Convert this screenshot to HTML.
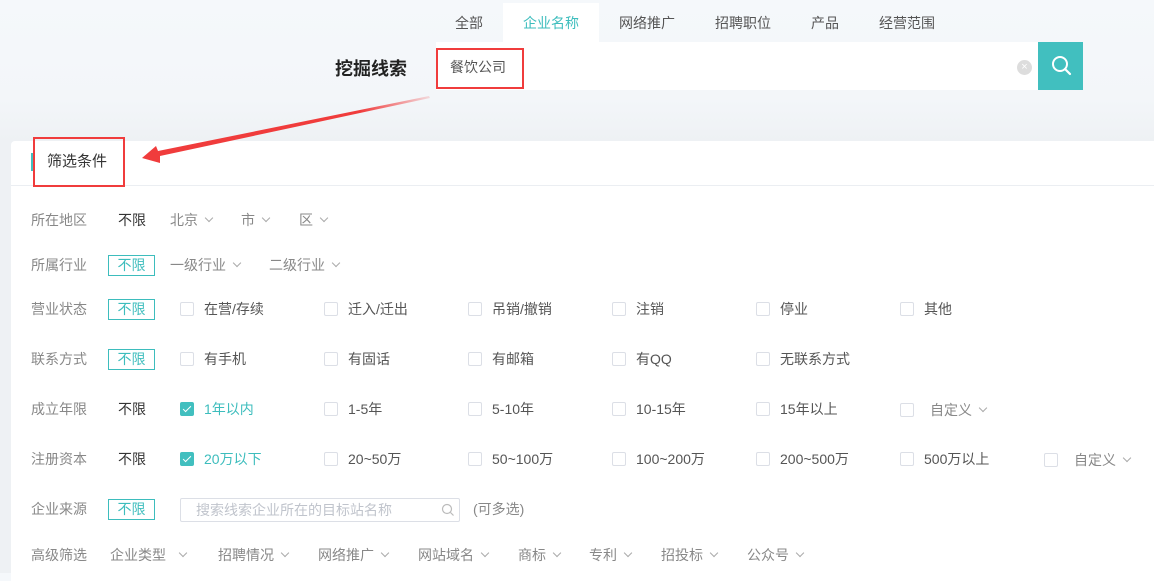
<!DOCTYPE html>
<html><head><meta charset="utf-8"><style>
*{margin:0;padding:0;box-sizing:border-box}
body{width:1154px;height:573px;overflow:hidden;position:relative;font-family:"Liberation Sans","Noto Sans CJK SC",sans-serif;font-size:14px;color:#555;background:linear-gradient(#f5f8fb 0,#f3f6f9 100px,#eef1f4 141px)}
.a{position:absolute;white-space:nowrap;line-height:20px}
.tab{top:12px;height:30px;line-height:22px;color:#555}
.lbl{color:#888;left:31px}
.nb{color:#333}
.box{border:1px solid #3dbdbd;color:#3dbdbd;width:47px;height:21px;line-height:19px;text-align:center;left:108px}
.cb{width:14px;height:14px;border:1px solid #dcdfe6;border-radius:2px;background:#fff}
.ck{background:#41bfbf;border-color:#41bfbf}
.ck:after{content:"";position:absolute;left:4px;top:1px;width:3px;height:7px;border:solid #fff;border-width:0 1.5px 1.5px 0;transform:rotate(45deg)}
.dd{color:#888}
.dd i{display:inline-block;width:6px;height:6px;border-right:1px solid #aaa;border-bottom:1px solid #aaa;transform:rotate(45deg);margin-left:8px;position:relative;top:-4px}
.t{color:#3dbdbd}
</style></head><body>
<div class="a" style="left:503px;top:3px;width:96px;height:39px;background:#fff"></div>
<div class="a tab" style="left:455px">全部</div>
<div class="a tab" style="left:523px;color:#3dbdbd">企业名称</div>
<div class="a tab" style="left:619px">网络推广</div>
<div class="a tab" style="left:715px">招聘职位</div>
<div class="a tab" style="left:811px">产品</div>
<div class="a tab" style="left:879px">经营范围</div>
<div class="a" style="left:335px;top:57px;font-size:18px;font-weight:bold;color:#222;line-height:24px">挖掘线索</div>
<div class="a" style="left:436px;top:42px;width:602px;height:48px;background:#fff"></div>
<div class="a" style="left:450px;top:57px;color:#555">餐饮公司</div>
<div class="a" style="left:1017px;top:60px;width:15px;height:15px;border-radius:50%;background:#ddd;color:#fff;font-size:11px;line-height:15px;text-align:center">×</div>
<div class="a" style="left:1038px;top:42px;width:45px;height:48px;background:#41bfbf">
<svg width="45" height="48" viewBox="0 0 45 48"><circle cx="22" cy="22" r="7" fill="none" stroke="#fff" stroke-width="2"/><path d="M27 27l5 5" stroke="#fff" stroke-width="2.2" stroke-linecap="round"/></svg></div>
<div class="a" style="left:436px;top:48px;width:88px;height:41px;border:2px solid #f03c3c"></div>

<div class="a" style="left:11px;top:141px;width:1150px;height:440px;background:#fff;border-radius:4px 0 0 0"></div>
<div class="a" style="left:11px;top:185px;width:1143px;height:1px;background:#ebeef2"></div>
<div class="a" style="left:31px;top:153px;width:2px;height:18px;background:#41bfbf"></div>
<div class="a" style="left:47px;top:152px;color:#333;font-size:15px">筛选条件</div>
<div class="a" style="left:33px;top:137px;width:92px;height:50px;border:2px solid #f03c3c"></div>

<svg class="a" style="left:0;top:0" width="1154" height="573"><defs><linearGradient id="g" x1="430" y1="96" x2="150" y2="156" gradientUnits="userSpaceOnUse"><stop offset="0" stop-color="#f03c3c" stop-opacity="0.15"/><stop offset="0.25" stop-color="#f03c3c"/></linearGradient></defs>
<polygon points="429,96 430,98 160,156 160,163 142,158 156,146 158,151" fill="url(#g)"/></svg>

<div class="a lbl" style="top:210px">所在地区</div>
<div class="a nb" style="left:118px;top:210px">不限</div>
<div class="a dd" style="left:170px;top:210px">北京<i></i></div>
<div class="a dd" style="left:241px;top:210px">市<i></i></div>
<div class="a dd" style="left:299px;top:210px">区<i></i></div>

<div class="a lbl" style="top:255px">所属行业</div>
<div class="a box" style="top:255px">不限</div>
<div class="a dd" style="left:170px;top:255px">一级行业<i></i></div>
<div class="a dd" style="left:269px;top:255px">二级行业<i></i></div>

<div class="a lbl" style="top:299px">营业状态</div>
<div class="a box" style="top:299px">不限</div>

<div class="a lbl" style="top:349px">联系方式</div>
<div class="a box" style="top:349px">不限</div>

<div class="a lbl" style="top:399px">成立年限</div>
<div class="a nb" style="left:118px;top:399px">不限</div>
<div class="a lbl" style="top:449px">注册资本</div>
<div class="a nb" style="left:118px;top:449px">不限</div>

<div class="a lbl" style="top:499px">企业来源</div>
<div class="a box" style="top:499px">不限</div>
<div class="a" style="left:180px;top:498px;width:280px;height:24px;border:1px solid #dcdfe6;border-radius:2px"></div>
<div class="a" style="left:196px;top:500px;color:#c0c4cc">搜索线索企业所在的目标站名称</div>
<svg class="a" style="left:441px;top:503px" width="14" height="14"><circle cx="6" cy="6" r="4.5" fill="none" stroke="#bbb" stroke-width="1.2"/><path d="M9.5 9.5l3 3" stroke="#bbb" stroke-width="1.2"/></svg>
<div class="a" style="left:473px;top:499px;color:#888">(可多选)</div>

<div class="a lbl" style="top:545px">高级筛选</div>
<div class="a dd" style="left:110px;top:545px">企业类型<i style="margin-left:14px"></i></div>
<div class="a dd" style="left:218px;top:545px">招聘情况<i></i></div>
<div class="a dd" style="left:318px;top:545px">网络推广<i></i></div>
<div class="a dd" style="left:418px;top:545px">网站域名<i></i></div>
<div class="a dd" style="left:518px;top:545px">商标<i></i></div>
<div class="a dd" style="left:589px;top:545px">专利<i></i></div>
<div class="a dd" style="left:661px;top:545px">招投标<i></i></div>
<div class="a dd" style="left:747px;top:545px">公众号<i></i></div>

<div class="a cb" style="left:180px;top:302px"></div><div class="a" style="left:204px;top:299px">在营/存续</div>
<div class="a cb" style="left:324px;top:302px"></div><div class="a" style="left:348px;top:299px">迁入/迁出</div>
<div class="a cb" style="left:468px;top:302px"></div><div class="a" style="left:492px;top:299px">吊销/撤销</div>
<div class="a cb" style="left:612px;top:302px"></div><div class="a" style="left:636px;top:299px">注销</div>
<div class="a cb" style="left:756px;top:302px"></div><div class="a" style="left:780px;top:299px">停业</div>
<div class="a cb" style="left:900px;top:302px"></div><div class="a" style="left:924px;top:299px">其他</div>

<div class="a cb" style="left:180px;top:352px"></div><div class="a" style="left:204px;top:349px">有手机</div>
<div class="a cb" style="left:324px;top:352px"></div><div class="a" style="left:348px;top:349px">有固话</div>
<div class="a cb" style="left:468px;top:352px"></div><div class="a" style="left:492px;top:349px">有邮箱</div>
<div class="a cb" style="left:612px;top:352px"></div><div class="a" style="left:636px;top:349px">有QQ</div>
<div class="a cb" style="left:756px;top:352px"></div><div class="a" style="left:780px;top:349px">无联系方式</div>

<div class="a cb ck" style="left:180px;top:402px"></div><div class="a t" style="left:204px;top:399px">1年以内</div>
<div class="a cb" style="left:324px;top:402px"></div><div class="a" style="left:348px;top:399px">1-5年</div>
<div class="a cb" style="left:468px;top:402px"></div><div class="a" style="left:492px;top:399px">5-10年</div>
<div class="a cb" style="left:612px;top:402px"></div><div class="a" style="left:636px;top:399px">10-15年</div>
<div class="a cb" style="left:756px;top:402px"></div><div class="a" style="left:780px;top:399px">15年以上</div>
<div class="a cb" style="left:900px;top:403px"></div><div class="a dd" style="left:930px;top:400px">自定义<i></i></div>

<div class="a cb ck" style="left:180px;top:452px"></div><div class="a t" style="left:204px;top:449px">20万以下</div>
<div class="a cb" style="left:324px;top:452px"></div><div class="a" style="left:348px;top:449px">20~50万</div>
<div class="a cb" style="left:468px;top:452px"></div><div class="a" style="left:492px;top:449px">50~100万</div>
<div class="a cb" style="left:612px;top:452px"></div><div class="a" style="left:636px;top:449px">100~200万</div>
<div class="a cb" style="left:756px;top:452px"></div><div class="a" style="left:780px;top:449px">200~500万</div>
<div class="a cb" style="left:900px;top:452px"></div><div class="a" style="left:924px;top:449px">500万以上</div>
<div class="a cb" style="left:1044px;top:453px"></div><div class="a dd" style="left:1074px;top:450px">自定义<i></i></div>
</body></html>
